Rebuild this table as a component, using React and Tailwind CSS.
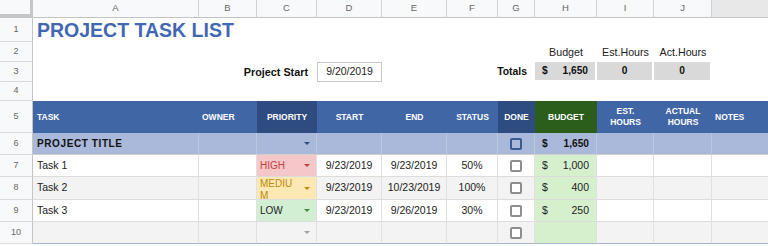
import React from "react";

const letters = ["A", "B", "C", "D", "E", "F", "G", "H", "I", "J"];

function Tri({ c }) {
  return (
    <svg width="6" height="3" viewBox="0 0 6 3" className="shrink-0">
      <path d="M0 0H6L3 3Z" fill={c} />
    </svg>
  );
}

function Box({ dark }) {
  return (
    <span
      className={
        dark
          ? "block w-[12px] h-[12px] rounded-[2px] border-2 border-[#3b5993]"
          : "block w-[12px] h-[12px] rounded-[2px] border-2 border-[#8e8e8e] bg-white"
      }
    />
  );
}

function RowNum({ n }) {
  return (
    <div className="bg-[#f8f9fa] border-r border-b border-r-[#c4c4c4] border-b-[#dadada] flex items-center justify-center text-[9px] text-[#666]">
      {n}
    </div>
  );
}

const PRI = {
  HIGH: { cell: "bg-[#f4c7c9] text-[#c63f3f]", tri: "#c63f3f" },
  MEDIUM: { cell: "bg-[#fce8b2] text-[#b98a0e]", tri: "#b98a0e" },
  LOW: { cell: "bg-[#d2eed3] text-[#3e8e41]", tri: "#3e8e41" },
  NONE: { cell: "bg-[#f3f3f3] text-[#999]", tri: "#a0a0a0" },
};

function DataRow({ n, alt, task, pri, start, end, status, budget, last }) {
  const bg = alt ? "bg-[#f3f3f3]" : "bg-white";
  const line = last ? "border-b-[#a9b3cf]" : "border-b-[#dcdcdc]";
  const base = `border-r border-b border-r-[#e0e0e0] ${line} text-[10.5px] text-[#222] flex items-center`;
  const p = PRI[pri || "NONE"];
  return (
    <>
      <RowNum n={n} />
      <div className={`${base} ${bg} pl-[4px] border-r-[#d4d4d4]`}>{task}</div>
      <div className={`${base} ${bg} border-r-[#d4d4d4]`} />
      <div className={`${base} ${p.cell} justify-between pl-[3px] pr-[6px] overflow-hidden`}>
        <span
          className={
            pri === "MEDIUM"
              ? "text-[10px] leading-[11.5px] w-[36px] break-all self-start pt-[1px]"
              : "text-[10px] leading-[11.5px] w-[36px]"
          }
        >
          {pri}
        </span>
        <Tri c={p.tri} />
      </div>
      <div className={`${base} ${bg} justify-center`}>{start}</div>
      <div className={`${base} ${bg} justify-center`}>{end}</div>
      <div className={`${base} ${bg} justify-center`}>{status}</div>
      <div className={`${base} ${bg} justify-center`}>
        <Box />
      </div>
      <div className={`${base} bg-[#d6f0ce] justify-between px-[7px]`}>
        <span>{budget ? "$" : ""}</span>
        <span>{budget}</span>
      </div>
      <div className={`${base} ${bg}`} />
      <div className={`${base} ${bg}`} />
      <div className={`${base} ${bg} border-r-0`} />
    </>
  );
}

export default function App() {
  const hdr = "flex items-center text-[8.5px] font-bold text-white leading-[10.7px]";
  const r6 = "bg-[#aab8da] border-r border-b border-r-[#bcc7e2] border-b-[#cfcfcf] flex items-center";
  return (
    <div className="w-[768px] h-[246px] bg-white overflow-hidden font-['Liberation_Sans',Arial,sans-serif]">
      <div className="grid grid-cols-[33px_166px_58px_60px_65px_65px_51px_37px_62px_57px_58px_56px] grid-rows-[18px_24px_20px_20px_19px_32px_22px_22px_23px_22px_22px]">
        {/* column headers */}
        <div className="bg-[#f8f9fa] border-r-[3px] border-b-[4px] border-[#c6c6c6]" />
        {letters.map((l) => (
          <div
            key={l}
            className="bg-[#f8f9fa] border-r border-b border-r-[#d2d2d2] border-b-[#c4c4c4] flex items-center justify-center text-[9.5px] text-[#666]"
          >
            {l}
          </div>
        ))}
        <div className="bg-[#e8e8e8] border-b border-[#c4c4c4]" />

        {/* row 1 */}
        <RowNum n={1} />
        <div className="col-span-11 flex items-center pl-[4px] pt-[2px] text-[19.5px] font-bold text-[#4267b2] whitespace-nowrap">
          PROJECT TASK LIST
        </div>

        {/* row 2 */}
        <RowNum n={2} />
        <div className="col-span-7" />
        <div className="flex items-end justify-center pb-[2px] text-[10.7px] text-[#222]">Budget</div>
        <div className="flex items-end justify-center pb-[2px] text-[10.7px] text-[#222]">Est.Hours</div>
        <div className="flex items-end justify-center pb-[2px] text-[10.7px] text-[#222]">Act.Hours</div>
        <div />

        {/* row 3 */}
        <RowNum n={3} />
        <div className="col-span-3 flex items-center justify-end pr-[9px] text-[10.8px] font-bold text-[#111] whitespace-nowrap">
          Project Start
        </div>
        <div className="border border-[#c8c8c8] flex items-center justify-center text-[10.5px] text-[#222]">
          9/20/2019
        </div>
        <div className="col-span-2" />
        <div className="flex items-center justify-end pr-[8px] text-[10.4px] font-bold text-[#111]">Totals</div>
        <div className="bg-[#d9d9d9] border-r-2 border-b-2 border-white flex items-center justify-between px-[7px] text-[10.2px] font-bold text-[#111]">
          <span>$</span>
          <span>1,650</span>
        </div>
        <div className="bg-[#d9d9d9] border-r-2 border-b-2 border-white flex items-center justify-center text-[10.2px] font-bold text-[#111]">
          0
        </div>
        <div className="bg-[#d9d9d9] border-r-2 border-b-2 border-white flex items-center justify-center text-[10.2px] font-bold text-[#111]">
          0
        </div>
        <div />

        {/* row 4 */}
        <RowNum n={4} />
        <div className="col-span-11" />

        {/* row 5 header */}
        <RowNum n={5} />
        <div className={`${hdr} bg-[#4166a6] pl-[4px]`}>TASK</div>
        <div className={`${hdr} bg-[#4166a6] pl-[3px]`}>OWNER</div>
        <div className={`${hdr} bg-[#2f4c80] justify-center`}>PRIORITY</div>
        <div className={`${hdr} bg-[#4166a6] justify-center`}>START</div>
        <div className={`${hdr} bg-[#4166a6] justify-center`}>END</div>
        <div className={`${hdr} bg-[#4166a6] justify-center`}>STATUS</div>
        <div className={`${hdr} bg-[#2f4c80] justify-center`}>DONE</div>
        <div className={`${hdr} bg-[#2b5e1b] justify-center`}>BUDGET</div>
        <div className={`${hdr} bg-[#4166a6] justify-center text-center`}>
          EST.
          <br />
          HOURS
        </div>
        <div className={`${hdr} bg-[#4166a6] justify-center text-center`}>
          ACTUAL
          <br />
          HOURS
        </div>
        <div className={`${hdr} bg-[#4166a6] pl-[3px]`}>NOTES</div>

        {/* row 6 */}
        <RowNum n={6} />
        <div className={`${r6} pl-[4px] text-[10px] font-bold tracking-[0.6px] text-[#111]`}>PROJECT TITLE</div>
        <div className={r6} />
        <div className={`${r6} justify-end pr-[6px]`}>
          <Tri c="#2f4c80" />
        </div>
        <div className={r6} />
        <div className={r6} />
        <div className={r6} />
        <div className={`${r6} justify-center`}>
          <Box dark />
        </div>
        <div className={`${r6} justify-between px-[7px] text-[10.2px] font-bold text-[#111]`}>
          <span>$</span>
          <span>1,650</span>
        </div>
        <div className={r6} />
        <div className={r6} />
        <div className={`${r6} border-r-0`} />

        <DataRow n={7} task="Task 1" pri="HIGH" start="9/23/2019" end="9/23/2019" status="50%" budget="1,000" />
        <DataRow n={8} alt task="Task 2" pri="MEDIUM" start="9/23/2019" end="10/23/2019" status="100%" budget="400" />
        <DataRow n={9} task="Task 3" pri="LOW" start="9/23/2019" end="9/26/2019" status="30%" budget="250" />
        <DataRow n={10} alt last task="" pri="" start="" end="" status="" budget="" />
      </div>
    </div>
  );
}
